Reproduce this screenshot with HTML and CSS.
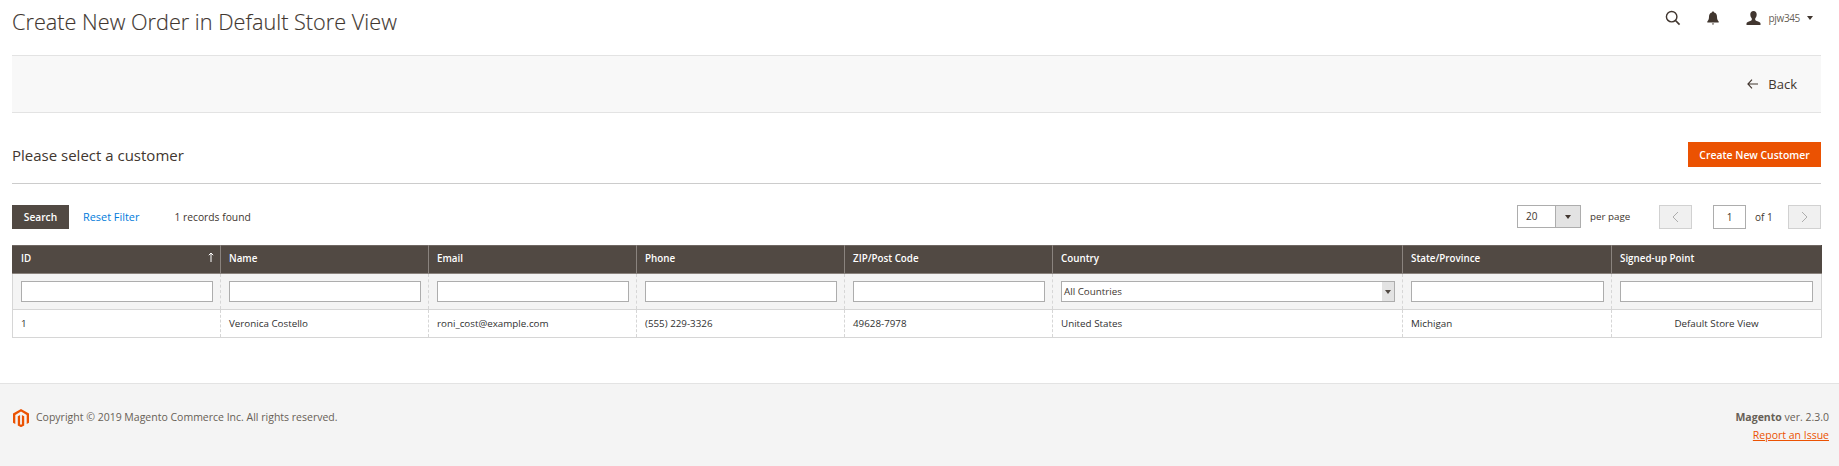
FILE: index.html
```html
<!DOCTYPE html>
<html lang="en">
<head>
<meta charset="utf-8">
<title>Create New Order</title>
<link rel="stylesheet" href="styles.css">
</head>
<body>
<div class="page">
  <header class="top">
    <h1 class="title">Create New Order in Default Store View</h1>
    <div class="top-tools">
      <svg class="ico-search" viewBox="0 0 18 18"><circle cx="7.5" cy="7.5" r="5.9" fill="none" stroke="#41362f" stroke-width="1.6"/><path d="M11.8 11.8l4.6 4.6" stroke="#41362f" stroke-width="1.9" fill="none"/></svg>
      <svg class="ico-bell" viewBox="0 0 12 14"><path d="M6 0.5c.7 0 1.1.4 1.1 1 2 .5 2.9 2 2.9 4.2 0 2.2.5 3.500 1.700 4.700v1H.3v-1C1.500 9.200 2 7.900 2 5.700 2 3.500 2.900 2 4.900 1.500c0-.6.400-1 1.100-1zM4.900 12.600h2.200c0 .6-.5 1-1.100 1s-1.100-.4-1.100-1z" fill="#41362f"/></svg>
      <span class="user">
        <svg class="ico-user" viewBox="0 0 15 14"><path d="M7.500 0c2 0 3.200 1.400 3.200 3.500 0 1.500-.6 3-1.500 3.900v1.300c0 .6 1 1 2.300 1.500 1.700.6 3 1 3 2.300V14H.5v-1.500c0-1.300 1.300-1.700 3-2.300 1.300-.5 2.300-.9 2.300-1.500V7.400C4.900 6.500 4.300 5 4.300 3.500 4.300 1.400 5.500 0 7.500 0z" fill="#41362f"/></svg>
        <span class="user-name">pjw345</span>
        <span class="caret"></span>
      </span>
    </div>
  </header>

  <div class="actions">
    <a class="back">
      <svg class="ico-back" viewBox="0 0 11 10"><path d="M5 .7L.9 5 5 9.300M1 5h10" fill="none" stroke="#41362f" stroke-width="1.100"/></svg>
      <span>Back</span>
    </a>
  </div>

  <div class="section-head">
    <h2 class="section-title">Please select a customer</h2>
    <button class="btn-primary">Create New Customer</button>
  </div>

  <div class="toolbar">
    <button class="btn-search">Search</button>
    <a class="reset">Reset Filter</a>
    <span class="found">1 records found</span>
    <div class="pager">
      <span class="per-select"><span class="per-value">20</span><span class="per-arrow"><span class="caret"></span></span></span>
      <span class="per-label">per page</span>
      <span class="page-btn page-prev"><svg viewBox="0 0 7 12"><path d="M6 1L1 6l5 5" fill="none" stroke="#adadad" stroke-width="1"/></svg></span>
      <span class="page-input">1</span>
      <span class="page-of">of 1</span>
      <span class="page-btn"><svg viewBox="0 0 7 12"><path d="M1 1l5 5-5 5" fill="none" stroke="#adadad" stroke-width="1"/></svg></span>
    </div>
  </div>

  <table class="grid">
    <colgroup>
      <col class="c1"><col class="c2"><col class="c3"><col class="c4"><col class="c5"><col class="c6"><col class="c7"><col class="c8">
    </colgroup>
    <thead>
      <tr>
        <th class="sorted">ID<svg class="sort-arrow" viewBox="0 0 6 10"><path d="M3 10V1M.8 3.200L3 1l2.200 2.200" fill="none" stroke="#fff" stroke-width="1"/></svg></th>
        <th>Name</th><th>Email</th><th>Phone</th><th>ZIP/Post Code</th><th>Country</th><th>State/Province</th><th>Signed-up Point</th>
      </tr>
      <tr class="filters">
        <td><span class="fi"></span></td>
        <td><span class="fi"></span></td>
        <td><span class="fi"></span></td>
        <td><span class="fi"></span></td>
        <td><span class="fi"></span></td>
        <td><span class="fi fi-select"><span class="fi-text">All Countries</span><span class="fi-arrow"><span class="caret caret-grey"></span></span></span></td>
        <td><span class="fi"></span></td>
        <td><span class="fi"></span></td>
      </tr>
    </thead>
    <tbody>
      <tr>
        <td>1</td><td>Veronica Costello</td><td>roni_cost@example.com</td><td>(555) 229-3326</td><td>49628-7978</td><td>United States</td><td>Michigan</td><td class="center">Default Store View</td>
      </tr>
    </tbody>
  </table>
</div>

<footer class="foot">
  <div class="foot-left">
    <svg class="logo" viewBox="0 0 16 18"><path d="M8 0L0 4.600v9.200l2.300 1.300V5.900L8 2.600l5.700 3.300v9.200l2.300-1.300V4.600z" fill="#eb5202"/><path d="M8.900 15.200L8 15.700l-.9-.5V5.900L4.800 7.200v9.200L8 18.200l3.200-1.800V7.200L8.900 5.900z" fill="#eb5202"/></svg>
    <span>Copyright © 2019 Magento Commerce Inc. All rights reserved.</span>
  </div>
  <div class="foot-right">
    <div><strong>Magento</strong> ver. 2.3.0</div>
    <a class="issue">Report an Issue</a>
  </div>
</footer>
</body>
</html>
```

FILE: styles.css
```css
* { box-sizing: border-box; }
html, body { margin: 0; padding: 0; }
body {
  font-family: "Open Sans", sans-serif;
  font-size: 10px;
  line-height: 1.4;
  color: #41362f;
  background: #fff;
  height: 466px;
  overflow: hidden;
}
.page { padding: 0 18px 0 12px; height: 383px; }

.top { height: 55px; display: flex; justify-content: space-between; }
.title { margin: 6px 0 0; font-size: 21.7px; font-weight: 300; line-height: 32px; color: #41362f; -webkit-text-stroke: 0.15px #41362f; }
.top-tools { display: flex; align-items: center; height: 36px; padding-right: 8px; }
.ico-search { width: 16px; height: 16px; margin-right: 26px; }
.ico-bell { width: 12px; height: 14px; margin-right: 27px; }
.user { display: flex; align-items: center; }
.ico-user { width: 15px; height: 14px; margin-right: 8px; }
.user-name { color: #676056; font-size: 10px; letter-spacing: -0.35px; margin-right: 1px; }
.caret {
  display: inline-block;
  width: 0; height: 0;
  border-left: 3px solid transparent;
  border-right: 3px solid transparent;
  border-top: 4px solid #41362f;
}
.user .caret { margin-left: 6px; }

.actions {
  height: 58px;
  background: #f8f8f8;
  border-top: 1px solid #e3e3e3;
  border-bottom: 1px solid #e3e3e3;
  display: flex;
  align-items: center;
  justify-content: flex-end;
  padding-right: 24px;
}
.back { display: flex; align-items: center; font-size: 13px; color: #41362f; }
.ico-back { width: 11px; height: 10px; margin-right: 10px; }

.section-head {
  margin-top: 29px;
  height: 42px;
  border-bottom: 1px solid #ccc;
  display: flex;
  justify-content: space-between;
  align-items: flex-start;
}
.section-title { margin: 1px 0 0; font-size: 15px; font-weight: 400; line-height: 25px; color: #41362f; }
.btn-primary {
  width: 133px; height: 25px;
  padding: 0;
  border: 0;
  background: #eb5202;
  color: #fff;
  font: 600 10.4px "Open Sans", sans-serif;
}

.toolbar { margin-top: 21px; height: 24px; display: flex; align-items: center; }
.btn-search {
  width: 57px; height: 24px;
  padding: 0;
  border: 0;
  background: #514943;
  color: #fff;
  font: 600 10.2px "Open Sans", sans-serif;
}
.reset { margin-left: 14px; color: #007bdb; font-size: 10.9px; }
.found { margin-left: 35px; color: #41362f; font-size: 10.3px; }
.pager { margin-left: auto; display: flex; align-items: center; }
.per-select {
  width: 64px; height: 23px;
  border: 1px solid #adadad;
  display: flex;
  margin-top: -1px;
}
.per-value { flex: 1; padding-left: 8px; line-height: 21px; }
.per-arrow { width: 25px; background: #e3e3e3; border-left: 1px solid #adadad; display: flex; align-items: center; justify-content: center; }
.per-label { margin-left: 9px; width: 69px; font-size: 9.8px; }
.page-btn {
  width: 33px; height: 24px;
  background: #f0f0f0;
  border: 1px solid #d1d1d1;
  display: flex;
  align-items: center;
  justify-content: center;
}
.page-btn svg { width: 7px; height: 12px; }
.page-input {
  width: 33px; height: 24px;
  margin-left: 21px;
  border: 1px solid #adadad;
  text-align: center;
  line-height: 22px;
}
.page-of { margin-left: 9px; width: 33px; }

.grid {
  margin-top: 16px;
  width: 1809px;
  table-layout: fixed;
  border-collapse: collapse;
  border: 1px solid #d6d6d6;
  font-size: 9.8px;
}
.c1, .c2, .c3, .c4, .c5 { width: 208px; }
.c6 { width: 350px; }
.c7 { width: 209px; }
.c8 { width: 210px; }
.grid th {
  height: 28px;
  padding: 0 8px 2px;
  background: #514943;
  color: #fff;
  font-weight: 600;
  text-align: left;
  border: 1px solid #8a837e;
  border-top-color: #6f6762;
  position: relative;
}
.grid th:first-child { border-left-color: #514943; }
.grid th:last-child { border-right-color: #514943; }
.sort-arrow { position: absolute; right: 6px; top: 6px; width: 6px; height: 10px; }
.filters td {
  height: 36px;
  padding: 0 7px 0 8px;
  background: #f4f4f4;
  border-left: 1px dashed #d6d6d6;
  border-right: 1px dashed #d6d6d6;
  border-bottom: 1px solid #d6d6d6;
}
.filters td:last-child { padding-right: 8px; }
.fi {
  display: flex;
  height: 21px;
  background: #fff;
  border: 1px solid #adadad;
  align-items: center;
}
.fi-text { flex: 1; padding-left: 2px; }
.fi-arrow { width: 12px; align-self: stretch; background: #e3e3e3; display: flex; align-items: center; justify-content: center; }
.caret-grey { border-top-color: #514943; }
tbody td {
  height: 28px;
  padding: 0 8px;
  border-left: 1px dashed #d6d6d6;
  border-right: 1px dashed #d6d6d6;
  border-bottom: 1px solid #d6d6d6;
  color: #303030;
}
.center { text-align: center; }

.foot {
  height: 83px;
  background: #f4f4f4;
  border-top: 1px solid #e3e3e3;
  display: flex;
  justify-content: space-between;
  padding: 24px 10px 0 13px;
  color: #676056;
  font-size: 10.5px;
}
.foot-left { display: flex; align-items: flex-start; height: 18px; }
.logo { width: 16px; height: 18px; margin-right: 7px; margin-top: 1px; }
.foot-left span { line-height: 18px; }
.foot-right { text-align: right; line-height: 18px; }
.foot-right strong { font-weight: 700; }
.issue { color: #eb5202; text-decoration: underline; }
```
